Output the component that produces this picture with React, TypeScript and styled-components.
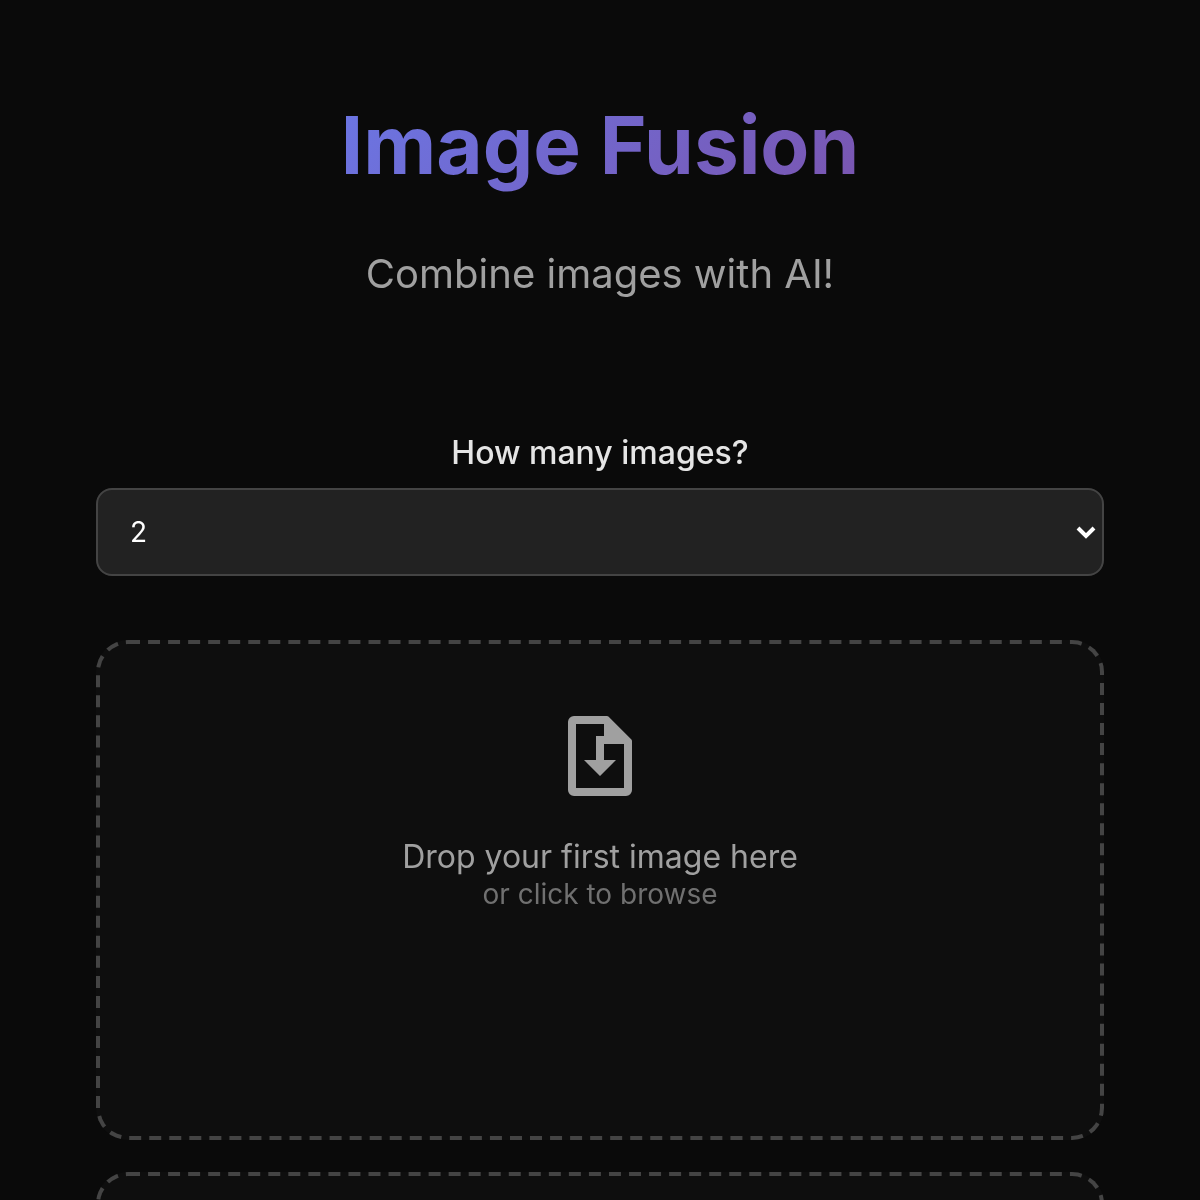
import React from 'react'
import styled, { createGlobalStyle } from 'styled-components'

const GlobalStyle = createGlobalStyle`
  html, body {
    margin: 0;
    padding: 0;
    background: #0a0a0a;
  }

  body {
    font-family: Inter, "Noto Sans", sans-serif;
    color: #e5e5e5;
    height: 1200px;
    overflow: hidden;
  }
`

// the page is laid out at 600px and shown at double density
const Page = styled.main`
  box-sizing: border-box;
  width: 600px;
  padding: 49px 48px 0;
  transform: scale(2);
  transform-origin: top left;
`

const Header = styled.header`
  text-align: center;
  margin-bottom: 64px;
`

const Title = styled.h1`
  margin: 0 0 25px;
  font-size: 40px;
  font-weight: 700;
  line-height: 1.2;
  background: linear-gradient(135deg, #6b76e4 0%, #7a55b0 100%);
  -webkit-background-clip: text;
  background-clip: text;
  color: transparent;
  display: inline-block;
`

const Subtitle = styled.p`
  margin: 0;
  font-size: 20px;
  font-weight: 400;
  line-height: 1.5;
  color: #a0a0a0;
`

const Field = styled.div`
  margin-bottom: 32px;
`

const Label = styled.label`
  display: block;
  margin-bottom: 7px;
  text-align: center;
  font-size: 16px;
  font-weight: 500;
  line-height: 1.3;
  color: #e5e5e5;
`

const Select = styled.select`
  display: block;
  box-sizing: border-box;
  width: 100%;
  height: 44px;
  padding: 0 12px;
  font-family: inherit;
  font-size: 14px;
  color: #ffffff;
  background-color: #222222;
  border: 1px solid #444444;
  border-radius: 8px;
`

const DropList = styled.div`
  display: flex;
  flex-direction: column;
  gap: 16px;
`

const DropZone = styled.div`
  box-sizing: border-box;
  height: 250px;
  padding: 32px;
  display: flex;
  flex-direction: column;
  align-items: center;
  flex-shrink: 0;
  text-align: center;
  background: #0e0e0e;
  border: 2px dashed #444444;
  border-radius: 16px;
`

const DropIcon = styled.svg`
  display: block;
  width: 48px;
  height: 48px;
  margin-bottom: 16px;
  fill: #a0a0a0;
`

const DropTitle = styled.div`
  font-size: 16px;
  font-weight: 400;
  line-height: 1.25;
  color: #a0a0a0;
`

const DropHint = styled.div`
  font-size: 14px;
  font-weight: 400;
  line-height: 1.3;
  color: #707070;
`

const FileIcon = () => (
  <DropIcon viewBox="0 0 48 48" aria-hidden="true">
    <path
      fillRule="evenodd"
      d="M11 4H27.5a1 1 0 0 1 .7.3L39.7 15.8a1 1 0 0 1 .3.7V41a3 3 0 0 1-3 3H11a3 3 0 0 1-3-3V7a3 3 0 0 1 3-3ZM12 8V40H36V18H26V26H32L24 34L16 26H22V14H26V8Z"
    />
  </DropIcon>
)

const App: React.FC = () => (
  <Page>
    <GlobalStyle />
    <Header>
      <Title>Image Fusion</Title>
      <Subtitle>Combine images with AI!</Subtitle>
    </Header>
    <Field>
      <Label htmlFor="count">How many images?</Label>
      <Select id="count" defaultValue="2">
        <option value="2">2</option>
        <option value="3">3</option>
        <option value="4">4</option>
      </Select>
    </Field>
    <DropList>
      <DropZone>
        <FileIcon />
        <DropTitle>Drop your first image here</DropTitle>
        <DropHint>or click to browse</DropHint>
      </DropZone>
      <DropZone>
        <FileIcon />
        <DropTitle>Drop your second image here</DropTitle>
        <DropHint>or click to browse</DropHint>
      </DropZone>
    </DropList>
  </Page>
)

export default App
